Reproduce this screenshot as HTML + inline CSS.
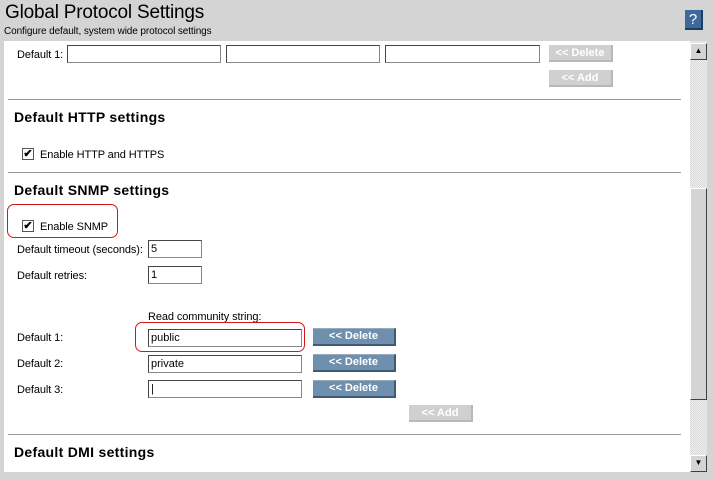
<!DOCTYPE html>
<html><head><style>
*{margin:0;padding:0;box-sizing:border-box}
body{width:714px;height:479px;background:#d4d4d4;font-family:"Liberation Sans",Arial,sans-serif;position:relative;overflow:hidden;color:#000}
.a{position:absolute}
.t{font-size:11px;letter-spacing:-0.1px}
.h{font-size:14px;font-weight:bold;letter-spacing:0.3px}
.in{position:absolute;height:18px;background:#fff;border:1px solid #888;border-top-color:#444;border-left-color:#444;font-size:11px;padding:2px 2px;line-height:12px}
.bd{position:absolute;height:17px;background:#d0d0d0;color:#fff;font-size:11px;font-weight:bold;text-align:center;line-height:16px;border-right:2px solid #b8b8b8;border-bottom:2px solid #b8b8b8}
.bb{position:absolute;height:18px;background:#6e8fae;color:#fff;font-size:11px;font-weight:bold;text-align:center;line-height:15px;border-right:2px solid #3f5a75;border-bottom:2px solid #3f5a75;border-top:1px solid #9ab;}
.ln{position:absolute;left:8px;width:673px;height:1px;background:#9a9a9a}
.cb{position:absolute;width:12px;height:12px;border:1px solid #555;background:#fff;font-size:11px;line-height:10px;text-align:center;font-weight:bold}
.red{position:absolute;border:1.5px solid #d01818;border-radius:7px}
</style></head><body>
<div class="a" style="left:5px;top:2px;font-size:19px;letter-spacing:-0.2px">Global Protocol Settings</div>
<div class="a t" style="left:4px;top:26px;font-size:10px">Configure default, system wide protocol settings</div>
<div class="a" style="left:685px;top:10px;width:18px;height:20px;background:#3d6a9a;color:#fff;font-size:15px;text-align:center;line-height:19px;border-right:2px solid #1f3d60;border-bottom:2px solid #1f3d60">?</div>
<div class="a" style="left:4px;top:41px;width:686px;height:431px;background:#fff"></div>
<div class="a" style="left:690px;top:41px;width:17px;height:431px;background:repeating-conic-gradient(#d8d8d8 0 25%,#f0f0f0 0 50%) 0 0/2px 2px"></div>
<div class="a" style="left:690px;top:43px;width:17px;height:17px;background:#d4d4d4;border:1px solid #fff;border-right-color:#404040;border-bottom-color:#404040;font-size:8px;text-align:center;line-height:14px">▲</div>
<div class="a" style="left:690px;top:188px;width:17px;height:212px;background:#d4d4d4;border:1px solid #fff;border-right-color:#404040;border-bottom-color:#404040"></div>
<div class="a" style="left:690px;top:455px;width:17px;height:17px;background:#d4d4d4;border:1px solid #fff;border-right-color:#404040;border-bottom-color:#404040;font-size:8px;text-align:center;line-height:14px">▼</div>

<div class="a t" style="left:17px;top:49px">Default 1:</div>
<div class="in" style="left:67px;top:45px;width:154px"></div>
<div class="in" style="left:226px;top:45px;width:154px"></div>
<div class="in" style="left:385px;top:45px;width:155px"></div>
<div class="bd" style="left:549px;top:45px;width:64px">&lt;&lt; Delete</div>
<div class="bd" style="left:549px;top:70px;width:64px">&lt;&lt; Add</div>
<div class="ln" style="top:99px"></div>
<div class="a h" style="left:14px;top:109px">Default HTTP settings</div>
<div class="cb" style="left:22px;top:148px">✔</div>
<div class="a t" style="left:40px;top:149px">Enable HTTP and HTTPS</div>
<div class="ln" style="top:172px"></div>
<div class="a h" style="left:14px;top:182px">Default SNMP settings</div>
<div class="red" style="left:7px;top:204px;width:111px;height:34px"></div>
<div class="cb" style="left:22px;top:220px">✔</div>
<div class="a t" style="left:40px;top:221px">Enable SNMP</div>
<div class="a t" style="left:17px;top:244px">Default timeout (seconds):</div>
<div class="in" style="left:148px;top:240px;width:54px">5</div>
<div class="a t" style="left:17px;top:270px">Default retries:</div>
<div class="in" style="left:148px;top:266px;width:54px">1</div>
<div class="a t" style="left:148px;top:311px">Read community string:</div>
<div class="a t" style="left:17px;top:332px">Default 1:</div>
<div class="red" style="left:135px;top:322px;width:170px;height:30px"></div>
<div class="in" style="left:148px;top:329px;width:154px">public</div>
<div class="bb" style="left:313px;top:328px;width:83px">&lt;&lt; Delete</div>
<div class="a t" style="left:17px;top:358px">Default 2:</div>
<div class="in" style="left:148px;top:355px;width:154px">private</div>
<div class="bb" style="left:313px;top:354px;width:83px">&lt;&lt; Delete</div>
<div class="a t" style="left:17px;top:384px">Default 3:</div>
<div class="in" style="left:148px;top:380px;width:154px">|</div>
<div class="bb" style="left:313px;top:380px;width:83px">&lt;&lt; Delete</div>
<div class="bd" style="left:409px;top:405px;width:64px">&lt;&lt; Add</div>
<div class="ln" style="top:434px"></div>
<div class="a h" style="left:14px;top:444px">Default DMI settings</div>
</body></html>
